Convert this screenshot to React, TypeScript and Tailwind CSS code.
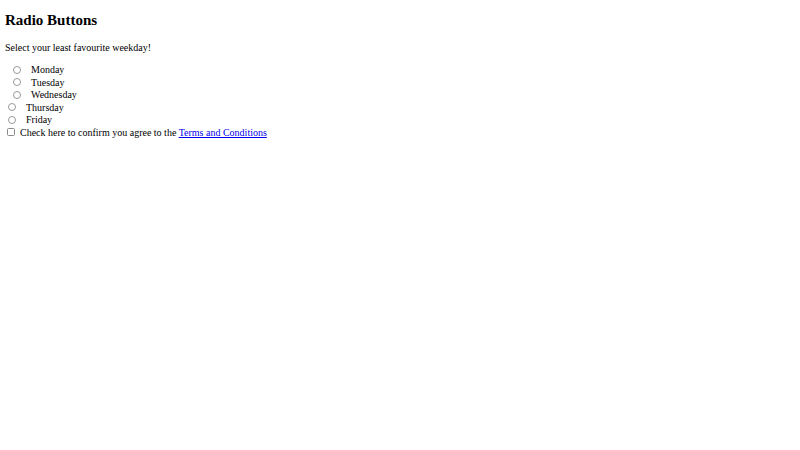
import { useState } from 'react';

const days = [
  { name: 'Monday', indent: true },
  { name: 'Tuesday', indent: true },
  { name: 'Wednesday', indent: true },
  { name: 'Thursday', indent: false },
  { name: 'Friday', indent: false },
];

export default function App() {
  const [day, setDay] = useState('');
  const [agreed, setAgreed] = useState(false);

  return (
    <div className="min-h-[450px] bg-white px-[5px] font-['Liberation_Serif',serif] text-[10px] text-black">
      <h2 className="pt-[12px] text-[15px] font-bold leading-[17px]">Radio Buttons</h2>
      <p className="mt-[13px] leading-[11.5px]">Select your least favourite weekday!</p>

      {/* weekday radios */}
      <div className="mt-[10px]">
        {days.map((d) => (
          <label key={d.name} className="flex h-[12.5px] items-center">
            <input
              type="radio"
              name="weekday"
              value={d.name}
              checked={day === d.name}
              onChange={() => setDay(d.name)}
              className={`h-[8px] w-[8px] shrink-0 appearance-none rounded-full border border-[#9a9a9a] bg-white checked:border-[2.5px] checked:border-[#0075ff] ${
                d.indent ? 'ml-[8px]' : 'ml-[3px]'
              }`}
            />
            <span className="ml-[10px] leading-[11.5px]">{d.name}</span>
          </label>
        ))}
        <label className="flex h-[12.5px] items-center">
          <input
            type="checkbox"
            checked={agreed}
            onChange={(e) => setAgreed(e.target.checked)}
            className="ml-[2px] h-[8px] w-[8px] shrink-0 appearance-none rounded-[1.5px] border border-[#8a8a8a] bg-white checked:border-[#0075ff] checked:bg-[#0075ff]"
          />
          <span className="ml-[5px] leading-[11.5px]">
            Check here to confirm you agree to the{' '}
            <a href="#" className="text-[#0000ee] underline">
              Terms and Conditions
            </a>
          </span>
        </label>
      </div>
    </div>
  );
}
